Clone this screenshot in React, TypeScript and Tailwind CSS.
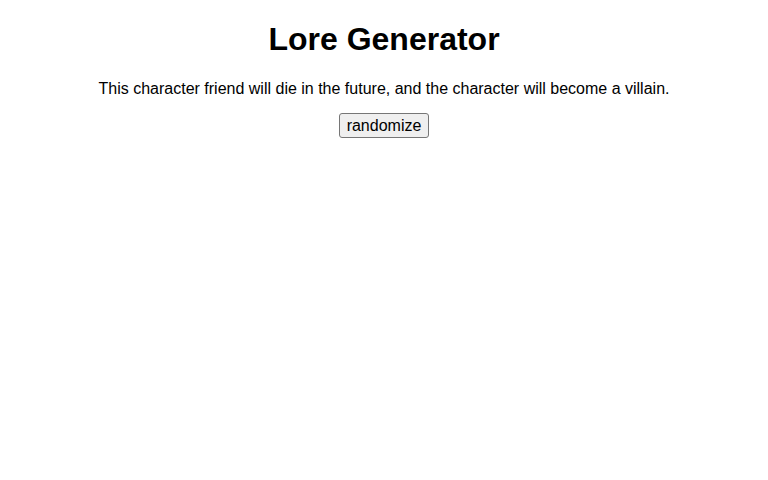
import React, { useState } from 'react';

const LORE = [
  'This character friend will die in the future, and the character will become a villain.',
  'This character was raised by wolves, and will one day return to lead the pack.',
  'This character lost their memory, and their rival knows the truth.',
  'This character will betray the kingdom, and the hero will never forgive them.',
];

const App: React.FC = () => {
  const [index, setIndex] = useState(0);

  const randomize = () => {
    setIndex(Math.floor(Math.random() * LORE.length));
  };

  return (
    <div className="min-h-screen bg-white text-center text-black font-['Liberation_Sans',Arial,sans-serif]">
      <div className="pt-[21px]">
        <h1 className="text-[32px] leading-[37px] font-bold">Lore Generator</h1>
        <p className="mt-[22px] text-base leading-[18px]">{LORE[index]}</p>
        <button
          onClick={randomize}
          className="mt-[15px] px-[7px] py-[2px] text-base leading-[19px] bg-[#efefef] border border-[#767676] rounded-[3px] hover:bg-[#e5e5e5]"
        >
          randomize
        </button>
      </div>
    </div>
  );
};

export default App;
